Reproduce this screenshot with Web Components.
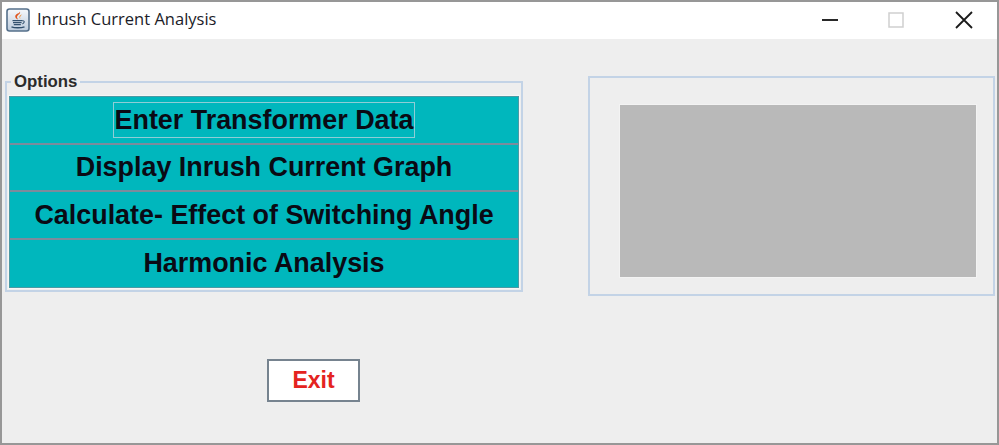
<!DOCTYPE html>
<html>
<head>
<meta charset="utf-8">
<title>Inrush Current Analysis</title>
<style>
  html, body { margin: 0; padding: 0; background: #eee; }
  body { font-family: "Liberation Sans", Arial, sans-serif; }
</style>
</head>
<body>
<app-window caption="Inrush Current Analysis">
  <options-panel label="Options">
    <menu-button focused>Enter Transformer Data</menu-button>
    <menu-button>Display Inrush Current Graph</menu-button>
    <menu-button>Calculate- Effect of Switching Angle</menu-button>
    <menu-button>Harmonic Analysis</menu-button>
  </options-panel>
  <preview-panel slot="side"></preview-panel>
  <exit-button slot="footer">Exit</exit-button>
</app-window>

<script>
// window frame: title bar + content grid
class AppWindow extends HTMLElement {
  constructor() {
    super();
    this.attachShadow({ mode: "open" });
    const caption = this.getAttribute("caption") || "";
    this.shadowRoot.innerHTML = `
      <style>
        :host {
          display: flex;
          flex-direction: column;
          box-sizing: border-box;
          width: 999px;
          height: 445px;
          border: 2px solid #979797;
          background: #eeeeee;
          overflow: hidden;
        }
        .bar {
          display: flex;
          align-items: center;
          height: 37px;
          flex: none;
          background: #fff;
          padding-left: 4px;
        }
        .icon { width: 24px; height: 24px; flex: none; margin-top: -1px; }
        .caption {
          margin: -4px 0 0 7px;
          font: 16.5px "Open Sans", "Noto Sans", sans-serif;
          color: #1c1c28;
          flex: 1;
        }
        .ctl { display: flex; align-items: center; margin-top: -2px; }
        .ctl svg { display: block; width: 20px; height: 20px; }
        .ctl .min { margin-right: 46px; }
        .ctl .max { margin-right: 48px; }
        .ctl .close { margin-right: 23px; }
        .body {
          flex: 1;
          display: grid;
          grid-template-columns: 518px 407px;
          column-gap: 65px;
          grid-template-rows: 225px 1fr;
          padding: 32px 0 0 3px;
        }
        .foot { grid-column: 1; padding: 63px 0 0 262px; }
        .side { padding-top: 5px; }
      </style>
      <div class="bar">
        <svg class="icon" viewBox="0 0 24 24">
          <defs>
            <linearGradient id="g" x1="0" y1="0" x2="0" y2="1">
              <stop offset="0" stop-color="#f6f8fb"/>
              <stop offset="1" stop-color="#bccbdc"/>
            </linearGradient>
          </defs>
          <rect x="1" y="1" width="22" height="22" rx="2.5" fill="url(#g)" stroke="#55708b" stroke-width="1.6"/>
          <path d="M14 3.4c1 2.4-3.6 3.8-3 6.2.2.8.8 1.4 1.2 2-2-.8-3.4-2.2-2.9-3.9.5-1.9 4.4-2.5 4.7-4.3z" fill="#e0561f"/>
          <path d="M16.2 6.2c-1.8.9-3.2 1.7-2.7 3.2.2.6.5 1 .6 1.7.3-.9-.2-1.4 0-2 .2-1 1.1-1.9 2.1-2.9z" fill="#ee8a2c"/>
          <path d="M6.5 12.6h9.5M7 14.6h8.6M7.8 16.6h7" stroke="#34526f" stroke-width="1.3" fill="none"/>
          <path d="M16 12.8c2.6-.6 3.2 2 .4 3.1" stroke="#34526f" stroke-width="1.1" fill="none"/>
          <path d="M5.5 18.9c3 1.2 9.5 1.2 13 0" stroke="#2f4d6b" stroke-width="1.4" fill="none"/>
        </svg>
        <span class="caption">${caption}</span>
        <div class="ctl">
          <svg class="min" viewBox="0 0 20 20"><path d="M2 10h16" stroke="#111" stroke-width="1.8"/></svg>
          <svg class="max" viewBox="0 0 20 20"><rect x="3" y="3" width="14" height="14" fill="none" stroke="#cfcfcf" stroke-width="1.5"/></svg>
          <svg class="close" viewBox="0 0 20 20"><path d="M2 2l16 16M18 2L2 18" stroke="#1a1a1a" stroke-width="1.8"/></svg>
        </div>
      </div>
      <div class="body">
        <div class="main"><slot></slot></div>
        <div class="side"><slot name="side"></slot></div>
        <div class="foot"><slot name="footer"></slot></div>
      </div>
    `;
  }
}
customElements.define("app-window", AppWindow);

// titled box with the four buttons
class OptionsPanel extends HTMLElement {
  constructor() {
    super();
    this.attachShadow({ mode: "open" });
    const label = this.getAttribute("label") || "";
    this.shadowRoot.innerHTML = `
      <style>
        :host { display: block; margin-top: 2px; }
        fieldset {
          margin: 0;
          padding: 5px 2px 2px;
          border: 2px solid #c3d3e6;
        }
        legend {
          margin-left: 2px;
          padding: 0 3px;
          font: bold 16.8px "Liberation Sans", Arial, sans-serif;
          color: #2b2b2b;
          line-height: 18px;
        }
        .list {
          display: grid;
          grid-auto-rows: 47.5px;
          border: 1px solid #4b9aa4;
          background: #00b7bd;
          outline: 1px solid #f6f6f6;
        }
      </style>
      <fieldset>
        <legend>${label}</legend>
        <div class="list"><slot></slot></div>
      </fieldset>
    `;
  }
}
customElements.define("options-panel", OptionsPanel);

class MenuButton extends HTMLElement {
  constructor() {
    super();
    this.attachShadow({ mode: "open" });
    this.shadowRoot.innerHTML = `
      <style>
        :host {
          display: flex;
          align-items: center;
          justify-content: center;
          box-sizing: border-box;
          background: #00b7bd;
          border-bottom: 2px solid #7d8b9c;
          font: bold 26.9px "Liberation Sans", Arial, sans-serif;
          color: #0a0a14;
          white-space: nowrap;
        }
        :host(:last-child) { border-bottom: 0; }
        span { display: block; padding: 0 1px; line-height: 34px; border: 1px solid transparent; }
        :host([focused]) span { border-color: #8fcdd6; }
      </style>
      <span><slot></slot></span>
    `;
  }
}
customElements.define("menu-button", MenuButton);

// empty panel on the right with the grey canvas
class PreviewPanel extends HTMLElement {
  constructor() {
    super();
    this.attachShadow({ mode: "open" });
    this.shadowRoot.innerHTML = `
      <style>
        :host {
          display: block;
          box-sizing: border-box;
          height: 220px;
          border: 2px solid #c3d3e6;
          padding: 27px 17px 17px 30px;
        }
        .canvas { height: 100%; background: #b9b9b9; box-shadow: 0 0 0 1px #f3f3f3; }
      </style>
      <div class="canvas"></div>
    `;
  }
}
customElements.define("preview-panel", PreviewPanel);

class ExitButton extends HTMLElement {
  constructor() {
    super();
    this.attachShadow({ mode: "open" });
    this.shadowRoot.innerHTML = `
      <style>
        :host {
          display: flex;
          align-items: center;
          justify-content: center;
          box-sizing: border-box;
          width: 93px;
          height: 43px;
          background: #fff;
          border: 2px solid #76838f;
          font: bold 23px "Liberation Sans", Arial, sans-serif;
          color: #e42320;
        }
      </style>
      <slot></slot>
    `;
  }
}
customElements.define("exit-button", ExitButton);
</script>
</body>
</html>
